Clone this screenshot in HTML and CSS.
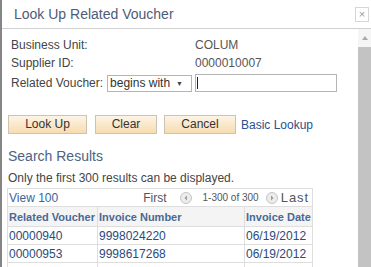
FILE: index.html
```html
<!DOCTYPE html>
<html>
<head>
<meta charset="utf-8">
<link rel="stylesheet" href="styles.css">
</head>
<body>
<div class="dialog">
  <div class="titlebar">
    <span class="title">Look Up Related Voucher</span>
    <span class="close">&#215;</span>
  </div>
  <div class="main">
    <div class="content">
      <div class="fields">
        <div class="frow"><span class="lbl">Business Unit:</span><span class="val">COLUM</span></div>
        <div class="frow"><span class="lbl">Supplier ID:</span><span class="val">0000010007</span></div>
        <div class="frow rv">
          <span class="lbl-short">Related Voucher:</span>
          <span class="select">begins with <span class="caret">&#9660;</span></span>
          <span class="input"><span class="cursor"></span></span>
        </div>
      </div>
      <div class="buttons">
        <span class="btn btn-lookup">Look Up</span>
        <span class="btn btn-clear">Clear</span>
        <span class="btn btn-cancel">Cancel</span>
        <span class="link">Basic Lookup</span>
      </div>
      <div class="sr">Search Results</div>
      <div class="note">Only the first 300 results can be displayed.</div>
      <table class="grid">
        <colgroup><col class="c1"><col class="c2"><col class="c3"></colgroup>
        <tr class="nav">
          <td colspan="3">
            <div class="navin">
              <span class="view">View 100</span>
              <span class="first">First</span>
              <svg class="arr arr-l" width="12" height="12" viewBox="0 0 12 12"><circle cx="6" cy="6" r="5.5" fill="#ececec" stroke="#c4c4c4"/><path d="M7 3.5 L4.5 6 L7 8.5 Z" fill="#9a9a9a"/></svg>
              <span class="count">1-300 of 300</span>
              <svg class="arr arr-r" width="12" height="12" viewBox="0 0 12 12"><circle cx="6" cy="6" r="5.5" fill="#ececec" stroke="#c4c4c4"/><path d="M5 3.5 L7.5 6 L5 8.5 Z" fill="#9a9a9a"/></svg>
              <span class="last">Last</span>
            </div>
          </td>
        </tr>
        <tr class="head"><th>Related Voucher</th><th>Invoice Number</th><th>Invoice Date</th></tr>
        <tr><td>00000940</td><td>9998024220</td><td>06/19/2012</td></tr>
        <tr><td>00000953</td><td>9998617268</td><td>06/19/2012</td></tr>
        <tr><td>00000960</td><td>9998631590</td><td>06/19/2012</td></tr>
      </table>
    </div>
    <div class="scrollbar">
      <div class="sb-track"><span class="sb-arrow"></span></div>
      <div class="sb-thumb"></div>
    </div>
  </div>
</div>
</body>
</html>
```
FILE: styles.css
```css
html, body {
  margin: 0;
  padding: 0;
  background: #ffffff;
  overflow: hidden;
}
body {
  font-family: "Liberation Sans", Arial, sans-serif;
  font-size: 12px;
  color: #444444;
}
.dialog {
  width: 369px;
  height: 267px;
  border-left: 2px solid #858585;
  display: flex;
  flex-direction: column;
  overflow: hidden;
}
.titlebar {
  height: 28px;
  flex: none;
  border-bottom: 1px solid #d0d0d0;
  display: flex;
  align-items: center;
  justify-content: space-between;
}
.title {
  padding-left: 12px;
  font-size: 14px;
  color: #4e5b78;
}
.close {
  width: 12px;
  height: 13px;
  border: 1px solid #d6d6d6;
  margin-right: 2px;
  margin-top: 1px;
  font-size: 11px;
  line-height: 12px;
  text-align: center;
  color: #9a9a9a;
}
.main {
  flex: 1;
  display: flex;
  min-height: 0;
}
.content {
  flex: 1;
  overflow: hidden;
}
.fields {
  padding: 7px 0 0 9px;
}
.frow {
  display: flex;
  align-items: center;
  height: 18px;
}
.frow.rv {
  height: 22px;
}
.lbl {
  width: 184px;
}
.val {
  color: #555555;
}
.select {
  margin-left: 4px;
  width: 81px;
  height: 15px;
  border: 1px solid #b5b5b5;
  padding-left: 2px;
  box-sizing: content-box;
  line-height: 15px;
  color: #333333;
  display: flex;
  align-items: center;
}
.caret {
  font-size: 7px;
  margin-left: 6px;
  color: #444;
}
.input {
  margin-left: 3px;
  width: 139px;
  height: 16px;
  border: 1px solid #b5b5b5;
  display: flex;
  align-items: center;
  padding-left: 1px;
}
.cursor {
  width: 1px;
  height: 12px;
  background: #222;
}
.buttons {
  margin: 21px 0 0 6px;
  display: flex;
  align-items: center;
  height: 19px;
}
.btn {
  box-sizing: border-box;
  height: 19px;
  border: 1px solid #cdc3b0;
  background: linear-gradient(#fdf4e6, #f7dcb0);
  color: #333333;
  text-align: center;
  line-height: 17px;
}
.btn-lookup { width: 79px; }
.btn-clear { width: 62px; margin-left: 8px; }
.btn-cancel { width: 72px; margin-left: 7px; }
.link {
  margin-left: 5px;
  color: #27508e;
}
.sr {
  margin: 13px 0 0 6px;
  font-size: 14px;
  line-height: 18px;
  color: #4e6282;
}
.note {
  margin: 4px 0 0 6px;
  line-height: 18px;
  color: #444444;
}
.grid {
  margin: 1px 0 0 5px;
  border-collapse: collapse;
  width: 305px;
  table-layout: fixed;
}
.c1 { width: 90px; }
.c2 { width: 147px; }
.c3 { width: 68px; }
.grid td, .grid th {
  border: 1px solid #dedede;
  padding: 0 0 0 1px;
  height: 17px;
  text-align: left;
  white-space: nowrap;
  overflow: hidden;
  color: #2a4a7c;
}
.grid .nav td {
  height: 17px;
  color: #555;
}
.navin {
  display: flex;
  align-items: center;
}
.view {
  color: #3a63a0;
}
.first {
  margin-left: 85px;
}
.arr-l { margin-left: 14px; }
.count {
  margin-left: 10px;
  font-size: 10px;
  color: #555;
}
.arr-r { margin-left: 7px; }
.last {
  margin-left: 3px;
  font-size: 13px;
  letter-spacing: 1px;
}
.grid th {
  height: 19px;
  background: #f4f4f4;
  font-size: 11px;
  font-weight: bold;
  color: #4a6892;
}
.scrollbar {
  width: 13px;
  flex: none;
  display: flex;
  flex-direction: column;
}
.sb-track {
  height: 18px;
  background: #f5f5f5;
  display: flex;
  justify-content: center;
  align-items: center;
}
.sb-arrow {
  width: 0;
  height: 0;
  border-left: 3px solid transparent;
  border-right: 3px solid transparent;
  border-bottom: 4px solid #a8a8a8;
}
.sb-thumb {
  flex: 1;
  background: #c3c3c3;
}
```
